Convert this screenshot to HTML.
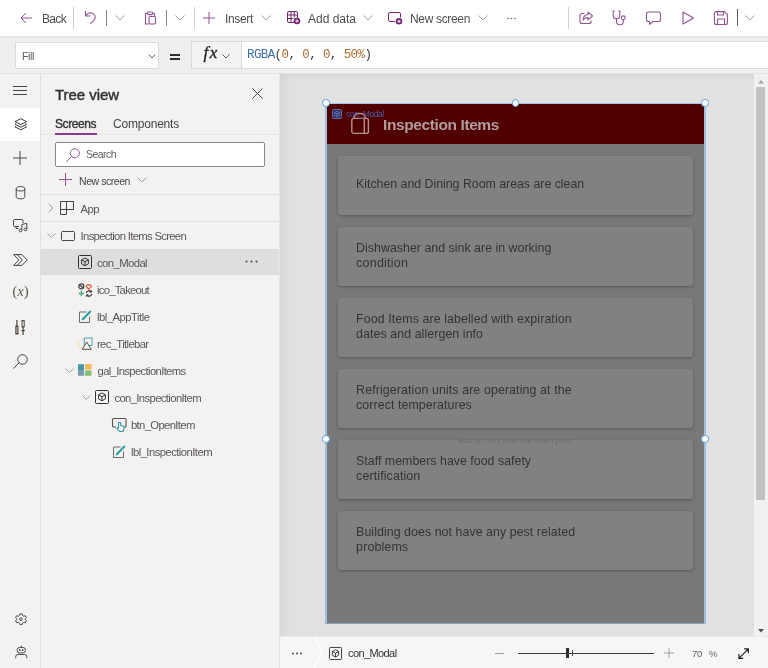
<!DOCTYPE html>
<html lang="en"><head><meta charset="utf-8"><title>Power Apps Studio - Inspection Items</title>
<style>
html,body{margin:0;padding:0}
body{width:768px;height:668px;position:relative;overflow:hidden;background:#f3f2f1;font-family:"Liberation Sans",sans-serif}
.a,.t,svg{position:absolute}
.t{white-space:nowrap}
svg{overflow:visible}
.topbar{left:0;top:0;width:768px;height:36px;background:#fff}
.fbar{left:0;top:36px;width:768px;height:38px;background:#f0efee;border-top:2px solid #e8e7e5;border-bottom:1px solid #e6e5e3;box-sizing:border-box}
.vsep{width:1px;background:#c8c6c4}
.card{left:338px;width:355px;height:59px;background:#818181;border-radius:3px;box-shadow:0 1px 3px rgba(0,0,0,.28)}
.h{width:5.500px;height:5.500px;border-radius:50%;background:#fff;border:1px solid #5a9ad8;box-sizing:content-box}
.row-sel{left:41px;top:248.700px;width:237.500px;height:26.600px;background:#dfdedc}
.hl{height:1px;background:#e1dfdd}
#app{position:absolute;left:0;top:0;width:768px;height:668px;will-change:transform}

</style></head>
<body>
<div id="app">
<!-- top command bar -->
<div class="a topbar"></div>
<div class="a vsep" style="left:72.500px;top:7px;height:22px;background:#d2d0ce"></div>
<div class="a vsep" style="left:106px;top:10px;height:16px;background:#8a8886"></div>
<div class="a vsep" style="left:166px;top:10px;height:16px;background:#8a8886"></div>
<div class="a vsep" style="left:194px;top:7px;height:22px;background:#d2d0ce"></div>
<div class="a vsep" style="left:568px;top:7px;height:22px;background:#d2d0ce"></div>
<div class="a vsep" style="left:737px;top:9px;height:17px;background:#605e5c"></div>

<!-- back arrow -->
<svg style="left:20px;top:12px" width="12" height="12" viewBox="0 0 12 12" fill="none" stroke="#8f558f" stroke-width="1"><path d="M12 6H1M6 1L1 6l5 5"/></svg>
<!-- undo -->
<svg style="left:84px;top:10px" width="13" height="14" viewBox="0 0 13 14" fill="none" stroke="#8f558f" stroke-width="1.1"><path d="M1.5 1v5h5"/><path d="M1.8 5.8C3.5 3.2 6.6 2 9.2 3.6c2.6 1.7 2.6 5 .6 7L6 13.6"/></svg>
<!-- chevrons -->
<svg style="left:115px;top:15px" width="10" height="6" viewBox="0 0 10 6" fill="none" stroke="#a19f9d" stroke-width="1"><path d="M.5.5l4.5 4.5L9.500.5"/></svg>
<svg style="left:175px;top:15px" width="10" height="6" viewBox="0 0 10 6" fill="none" stroke="#a19f9d" stroke-width="1"><path d="M.5.5l4.5 4.5L9.500.5"/></svg>
<svg style="left:261px;top:15px" width="10" height="6" viewBox="0 0 10 6" fill="none" stroke="#a19f9d" stroke-width="1"><path d="M.5.5l4.5 4.5L9.500.5"/></svg>
<svg style="left:363px;top:15px" width="10" height="6" viewBox="0 0 10 6" fill="none" stroke="#a19f9d" stroke-width="1"><path d="M.5.5l4.5 4.5L9.500.5"/></svg>
<svg style="left:478px;top:15px" width="10" height="6" viewBox="0 0 10 6" fill="none" stroke="#a19f9d" stroke-width="1"><path d="M.5.5l4.5 4.5L9.500.5"/></svg>
<svg style="left:745px;top:15px" width="10" height="6" viewBox="0 0 10 6" fill="none" stroke="#a19f9d" stroke-width="1"><path d="M.5.5l4.5 4.5L9.500.5"/></svg>
<!-- paste -->
<svg style="left:144px;top:11px" width="13" height="14" viewBox="0 0 13 14" fill="none" stroke="#8f558f" stroke-width="1.1"><path d="M3.500 2.500H1.500v10.500h3"/><path d="M8.500 2.500h2v2.500"/><rect x="3.500" y="1" width="5" height="2.600" rx=".8" fill="#fff"/><rect x="5" y="5.500" width="6.500" height="7.500" rx="1"/></svg>
<!-- insert plus -->
<svg style="left:203px;top:12px" width="12" height="12" viewBox="0 0 12 12" fill="none" stroke="#8f558f" stroke-width="1"><path d="M6 0v12M0 6h12"/></svg>
<!-- add data -->
<svg style="left:287px;top:11px" width="14" height="14" viewBox="0 0 14 14" fill="none" stroke="#742774" stroke-width="1"><rect x=".5" y=".5" width="10" height="11" rx="1.500"/><path d="M.5 4h10M.5 7.500h6M4 .5v11M7.300.5v6"/><circle cx="10" cy="10" r="3.300" fill="#742774" stroke="none"/><path d="M10 8.300v3.400M8.300 10h3.400" stroke="#fff" stroke-width=".9"/></svg>
<!-- new screen -->
<svg style="left:388px;top:12px" width="15" height="13" viewBox="0 0 15 13" fill="none" stroke="#742774" stroke-width="1"><path d="M7 9.500H2a1.500 1.500 0 0 1-1.500-1.500V2A1.500 1.500 0 0 1 2 .5h9A1.500 1.500 0 0 1 12.500 2v3.500"/><circle cx="11" cy="9.300" r="3.300" fill="#742774" stroke="none"/><path d="M11 7.600V11M9.300 9.300h3.400" stroke="#fff" stroke-width=".9"/></svg>
<!-- ellipsis -->
<svg style="left:507px;top:17px" width="9" height="3" viewBox="0 0 9 3" fill="#605e5c"><circle cx="1" cy="1.500" r=".8"/><circle cx="4.500" cy="1.500" r=".8"/><circle cx="8" cy="1.500" r=".8"/></svg>
<!-- share -->
<svg style="left:579px;top:11px" width="15" height="14" viewBox="0 0 15 14" fill="none" stroke="#8f558f" stroke-width="1.100" stroke-linejoin="round"><path d="M5.500 2.500H3A2 2 0 0 0 1 4.500v6A2 2 0 0 0 3 12.500h7a2 2 0 0 0 2-2V9.500"/><path d="M9 1.200L13.500 5 9 8.800V6.600C6.500 6.500 5 7.400 4 9c.2-3 1.800-5.200 5-5.500z"/></svg>
<!-- stethoscope -->
<svg style="left:612px;top:10px" width="16" height="16" viewBox="0 0 16 16" fill="none" stroke="#8f558f" stroke-width="1.100"><path d="M2.800 1H1.200v4.500a3.300 3.300 0 0 0 6.600 0V1H6.200"/><path d="M4.500 8.800v2.500a3.400 3.400 0 0 0 6.800 0V9.800"/><circle cx="11.300" cy="7.800" r="1.900"/></svg>
<!-- comment -->
<svg style="left:646px;top:11px" width="15" height="14" viewBox="0 0 15 14" fill="none" stroke="#8f558f" stroke-width="1.100" stroke-linejoin="round"><path d="M2.500 1h10a2 2 0 0 1 2 2v5.500a2 2 0 0 1-2 2H7L3.500 13.300V10.500H2.500a2 2 0 0 1-2-2V3a2 2 0 0 1 2-2z"/></svg>
<!-- play -->
<svg style="left:682px;top:11px" width="12" height="14" viewBox="0 0 12 14" fill="none" stroke="#8f558f" stroke-width="1.100" stroke-linejoin="round"><path d="M1 1l10.500 6L1 13z"/></svg>
<!-- save -->
<svg style="left:714px;top:11px" width="14" height="14" viewBox="0 0 14 14" fill="none" stroke="#8f558f" stroke-width="1.100" stroke-linejoin="round"><path d="M2.500.600h8L13.400 3.500v8a2 2 0 0 1-2 2h-9a2 2 0 0 1-2-2v-9a2 2 0 0 1 2-2z"/><path d="M3.500.600v3.400h6V.600M3.500 13.400V8h7v5.400"/></svg>

<!-- formula bar -->
<div class="a fbar"></div>
<div class="a" style="left:15px;top:42px;width:144px;height:26.600px;background:#fff;border:1px solid #dcdad8;box-sizing:border-box;border-radius:1px"></div>
<svg style="left:147.500px;top:53.500px" width="8" height="5" viewBox="0 0 8 5" fill="none" stroke="#605e5c" stroke-width="1"><path d="M.5.5L4 4 7.500.5"/></svg>
<div class="a" style="left:170px;top:54px;width:10px;height:2px;background:#323130"></div>
<div class="a" style="left:170px;top:58px;width:10px;height:2px;background:#323130"></div>
<div class="a" style="left:191px;top:41px;width:577px;height:28px;background:#fff;border-top:1px solid #dddbd9;border-bottom:1px solid #dddbd9;box-sizing:border-box"></div>
<div class="a" style="left:191px;top:42px;width:51px;height:26px;background:#f4f3f2;border:1px solid #dcdad8;border-width:0 1px 0 1px;box-sizing:border-box"></div>
<span class="t" style="left:203.500px;top:43px;font:italic 17px/20px 'Liberation Serif',serif;color:#201f1e;letter-spacing:1.600px;-webkit-text-stroke:.35px #201f1e">fx</span>
<svg style="left:222px;top:54px" width="8" height="5" viewBox="0 0 8 5" fill="none" stroke="#605e5c" stroke-width="1"><path d="M.5.5L4 4 7.500.5"/></svg>
<span class="t" style="left:247px;top:46px;font:12.500px/18px 'Liberation Mono',monospace;color:#3b3a39;letter-spacing:-.6px"><span style="color:#3d6fa8">RGBA</span>(<span style="color:#b06a30">0</span>, <span style="color:#b06a30">0</span>, <span style="color:#b06a30">0</span>, <span style="color:#b06a30">50%</span>)</span>

<!-- left rail -->
<div class="a" style="left:0;top:74px;width:40px;height:594px;background:#f3f2f1;border-right:1px solid #e1dfdd"></div>
<div class="a" style="left:0;top:108px;width:40px;height:33px;background:#fff"></div>
<svg style="left:13px;top:86px" width="14" height="9" viewBox="0 0 14 9" fill="none" stroke="#484644" stroke-width="1"><path d="M0 .5h14M0 4.500h14M0 8.500h14"/></svg>
<!-- layers -->
<svg style="left:13.500px;top:118px" width="13.500" height="12.500" viewBox="0 0 14 13" fill="none" stroke="#323130" stroke-width="1" stroke-linejoin="round"><path d="M7 .7l6 3.100L7 6.900 1 3.800z"/><path d="M2.200 5.900L1 6.500l6 3.100 6-3.100-1.200-.6"/><path d="M2.200 8.600L1 9.200l6 3.100 6-3.100-1.200-.6"/></svg>
<svg style="left:13px;top:151px" width="14" height="14" viewBox="0 0 14 14" fill="none" stroke="#484644" stroke-width="1"><path d="M7 0v14M0 7h14"/></svg>
<!-- cylinder -->
<svg style="left:14.500px;top:185.500px" width="11" height="13.500" viewBox="0 0 11 13.500" fill="none" stroke="#484644" stroke-width="1"><ellipse cx="5.500" cy="2.800" rx="4.300" ry="2.200"/><path d="M1.200 2.800v7.800c0 1.300 1.900 2.300 4.300 2.300s4.300-1 4.300-2.300V2.800"/></svg>
<!-- media -->
<svg style="left:12.500px;top:219px" width="15" height="14" viewBox="0 0 15 14" fill="none" stroke="#484644" stroke-width="1"><path d="M6 7.500H1.700A1.200 1.200 0 0 1 .5 6.300V1.700A1.200 1.200 0 0 1 1.700.5h7.100A1.200 1.200 0 0 1 10 1.700v2.300"/><path d="M3 7.500v2h2.500"/><path d="M8.800 11.300V5.500l5-1.200v5.900"/><circle cx="7.500" cy="11.500" r="1.400"/><circle cx="12.400" cy="10.400" r="1.400"/></svg>
<!-- power automate -->
<svg style="left:12.500px;top:254px" width="15" height="12" viewBox="0 0 15 12" fill="none" stroke="#484644" stroke-width="1" stroke-linejoin="round"><path d="M.6.600h8.400l5.200 5.400-5.200 5.400H.6l5.200-5.400z"/><path d="M4.200.600l5.200 5.400-5.200 5.400"/></svg>
<span class="t" style="left:12.500px;top:283px;font:14px/18px 'Liberation Serif',serif;color:#55534f;letter-spacing:.3px">(<i>x</i>)</span>
<!-- tools -->
<svg style="left:15px;top:319.500px" width="10" height="15" viewBox="0 0 10 15" fill="#484644" stroke="none"><rect x="1.300" y="0" width="1.200" height="6"/><rect x=".3" y="5.500" width="3.200" height="9" rx=".6"/><rect x="1.300" y="7" width="1.200" height="6" fill="#c9a9a0"/><rect x="6.500" y="0" width="3.200" height="7.500" rx=".6"/><rect x="7.500" y="1.200" width="1.200" height="5" fill="#f3f2f1"/><rect x="7.500" y="7" width="1.200" height="8"/><rect x="6.300" y="10" width="3.600" height="1.100"/></svg>
<!-- search -->
<svg style="left:12.500px;top:353.500px" width="15" height="15" viewBox="0 0 15 15" fill="none" stroke="#484644" stroke-width="1"><circle cx="9.500" cy="5.500" r="4.800"/><path d="M6 9L.5 14.500"/></svg>
<!-- gear -->
<svg style="left:14.500px;top:613px" width="12" height="12.500" viewBox="0 0 13 14" fill="none" stroke="#484644" stroke-width="1.100" stroke-linejoin="round"><circle cx="6.500" cy="7" r="1.500"/><path d="M5.300 1h2.400l.5 1.800 1.400.8 1.800-.5 1.200 2.100-1.300 1.300v1l1.300 1.300-1.200 2.100-1.800-.5-1.400.8L7.700 13H5.300l-.5-1.800-1.400-.8-1.800.5L.4 8.800 1.700 7.500v-1L.4 5.200l1.200-2.100 1.800.5 1.400-.8z"/></svg>
<!-- agent -->
<svg style="left:15px;top:645px" width="12.500" height="14" viewBox="0 0 14 15" fill="none" stroke="#484644" stroke-width="1.100" stroke-linejoin="round"><path d="M7 .5v2"/><rect x="2.500" y="2.500" width="9" height="6" rx="2.300"/><circle cx="5.400" cy="5.300" r=".6" fill="#484644"/><circle cx="8.600" cy="5.300" r=".6" fill="#484644"/><path d="M.8 14.500v-1.700A2.500 2.500 0 0 1 3.300 10.300h7.400a2.500 2.500 0 0 1 2.500 2.500v1.700"/></svg>

<!-- tree panel -->
<div class="a" style="left:41px;top:74px;width:237.500px;height:594px;background:#f3f2f1;border-right:1px solid #e6e5e3"></div>
<div class="a hl" style="left:41px;top:133.500px;width:238px;background:#e7e6e4"></div>
<svg style="left:252px;top:88px" width="11" height="11" viewBox="0 0 11 11" fill="none" stroke="#484644" stroke-width="1"><path d="M.5.5l10 10M10.500.5l-10 10"/></svg>
<div class="a" style="left:55px;top:132px;width:42px;height:2px;background:#8a3a8a;margin-top:.5px"></div>
<div class="a" style="left:55px;top:141.500px;width:210px;height:25px;background:#fff;border:1px solid #8a8886;border-radius:2px;box-sizing:border-box"></div>
<svg style="left:66px;top:148px" width="14" height="14" viewBox="0 0 14 14" fill="none" stroke="#8f558f" stroke-width="1"><circle cx="8.800" cy="5.200" r="4.500"/><path d="M5.500 8.500L.5 13.500"/></svg>
<svg style="left:59px;top:173px" width="13" height="13" viewBox="0 0 13 13" fill="none" stroke="#8f558f" stroke-width="1"><path d="M6.500 0v13M0 6.500h13"/></svg>
<svg style="left:137px;top:177px" width="10" height="6" viewBox="0 0 10 6" fill="none" stroke="#a19f9d" stroke-width="1"><path d="M.5.5l4.500 4.500L9.500.5"/></svg>
<div class="a hl" style="left:41px;top:194px;width:238px"></div>
<div class="a hl" style="left:41px;top:221px;width:238px"></div>
<div class="a row-sel"></div>
<!-- App row -->
<svg style="left:48px;top:203px" width="6" height="10" viewBox="0 0 6 10" fill="none" stroke="#a19f9d" stroke-width="1"><path d="M.5.5L5 5 .5 9.500"/></svg>
<svg style="left:60px;top:201px" width="14" height="14" viewBox="0 0 14 14" fill="none" stroke="#484644" stroke-width="1"><rect x=".5" y=".5" width="13" height="8"/><path d="M6.500.5v13M.5 8.500v5h6"/></svg>
<!-- screen row -->
<svg style="left:47px;top:233px" width="9" height="6" viewBox="0 0 9 6" fill="none" stroke="#a19f9d" stroke-width="1"><path d="M.5.5l4 4 4-4"/></svg>
<svg style="left:61px;top:231px" width="14" height="10" viewBox="0 0 14 10" fill="none" stroke="#484644" stroke-width="1"><rect x=".5" y=".5" width="13" height="9" rx="1"/></svg>
<!-- con_Modal -->
<svg style="left:77.500px;top:255px" width="14" height="14" viewBox="0 0 14 14" fill="none" stroke="#323130" stroke-width="1" stroke-linejoin="round"><rect x=".5" y=".5" width="13" height="13" rx="1"/><path d="M7 3l3.400 1.800v4L7 10.800 3.600 8.800v-4zM3.600 4.800L7 6.700l3.400-1.900M7 6.700v4.100"/></svg>
<svg style="left:245px;top:260px" width="13" height="3" viewBox="0 0 13 3" fill="#484644"><circle cx="1.500" cy="1.500" r="1"/><circle cx="6.500" cy="1.500" r="1"/><circle cx="11.500" cy="1.500" r="1"/></svg>
<!-- ico_Takeout (icons) -->
<svg style="left:77.500px;top:282.500px" width="15" height="14" viewBox="0 0 15 14" fill="none" stroke-width="1.300"><circle cx="3.300" cy="3.300" r="2.500" stroke="#484644"/><path d="M1.600 1.600l3.400 3.400" stroke="#484644"/><path d="M10.800 6.300L8.300 3.600a1.500 1.500 0 0 1 2.500-1.400 1.500 1.500 0 0 1 2.500 1.400z" stroke="#e0664a" stroke-linejoin="round"/><path d="M3.300 7.800v5.400M.6 10.500H6" stroke="#4aa878"/><path d="M8.300 10a2.700 2.700 0 0 1 4.800-1.200M13.700 11a2.700 2.700 0 0 1-4.800 1.200" stroke="#484644"/><path d="M13.500 7.200v2h-2M8.500 13.800v-2h2" stroke="#484644" stroke-width="1"/></svg>
<!-- lbl_AppTitle -->
<svg style="left:79px;top:309.5px" width="13" height="13" viewBox="0 0 13 13" fill="none"><path d="M7.500 2H.5v10.500h10V6.500" stroke="#6e6c6a" stroke-width="1"/><path d="M3.800 9.300L11.300 1.600" stroke="#2aa0a4" stroke-width="2.100" stroke-linecap="round"/><path d="M2.900 10.300l.5-1.800 1.300 1.300z" fill="#2aa0a4"/></svg>
<!-- rec_Titlebar -->
<svg style="left:77px;top:337px" width="16" height="14" viewBox="0 0 16 14" fill="none" stroke-width="1"><circle cx="5" cy="7" r="4.300" stroke="#f2d6a8"/><rect x="7.300" y="1" width="7.700" height="7.500" stroke="#4aa6b8" fill="#f3f2f1"/><path d="M9.700 5l4.500 7.300H5.200z" stroke="#55534f" fill="#f3f2f1" stroke-linejoin="round"/></svg>
<!-- gal_InspectionItems -->
<svg style="left:64.500px;top:368px" width="9" height="6" viewBox="0 0 9 6" fill="none" stroke="#a19f9d" stroke-width="1"><path d="M.5.5l4 4 4-4"/></svg>
<svg style="left:77.500px;top:364px" width="13.500" height="12" viewBox="0 0 14 12"><rect x="0" y="0" width="6.300" height="6" fill="#4a9aa4"/><rect x="0" y="6" width="6.300" height="6" fill="#7c9cac"/><rect x="7.300" y="0" width="6.700" height="5.500" fill="#f0b850"/><rect x="7.300" y="6.500" width="6.700" height="5.500" fill="#84c070"/></svg>
<!-- con_InspectionItem -->
<svg style="left:81.500px;top:395px" width="9" height="6" viewBox="0 0 9 6" fill="none" stroke="#a19f9d" stroke-width="1"><path d="M.5.5l4 4 4-4"/></svg>
<svg style="left:94.500px;top:390px" width="14" height="14" viewBox="0 0 14 14" fill="none" stroke="#323130" stroke-width="1" stroke-linejoin="round"><rect x=".5" y=".5" width="13" height="13" rx="1"/><path d="M7 3l3.400 1.800v4L7 10.800 3.600 8.800v-4zM3.600 4.800L7 6.700l3.400-1.900M7 6.700v4.100"/></svg>
<!-- btn_OpenItem -->
<svg style="left:111.500px;top:418px" width="15" height="15" viewBox="0 0 15 15" fill="none" stroke-width="1.100"><path d="M4 9H1.500a1 1 0 0 1-1-1v-6.500a1 1 0 0 1 1-1h11.500a1 1 0 0 1 1 1v6.500a1 1 0 0 1-1 1H12.500" stroke="#55534f"/><path d="M6.500 10V5.300a1.100 1.100 0 0 1 2.200 0V7.500l2.300.5a1.500 1.500 0 0 1 1.100 1.800l-.5 2.200a2 2 0 0 1-2 1.500H8.500a2.500 2.500 0 0 1-2-1L4.800 10.500a1 1 0 0 1 1.700-.5z" stroke="#2a95a5" fill="#f3f2f1" stroke-linejoin="round"/></svg>
<!-- lbl_InspectionItem -->
<svg style="left:112.5px;top:444.5px" width="13" height="13" viewBox="0 0 13 13" fill="none"><path d="M7.500 2H.5v10.500h10V6.500" stroke="#6e6c6a" stroke-width="1"/><path d="M3.800 9.300L11.300 1.600" stroke="#2aa0a4" stroke-width="2.100" stroke-linecap="round"/><path d="M2.900 10.300l.5-1.800 1.300 1.300z" fill="#2aa0a4"/></svg>

<!-- canvas -->
<div class="a" style="left:279.500px;top:74px;width:474.500px;height:562px;background:linear-gradient(180deg,rgba(0,0,0,.045) 0,rgba(0,0,0,0) 7px),linear-gradient(90deg,#d9d9d9 0,#e1e1e1 11px)"></div>
<!-- scrollbar -->
<div class="a" style="left:754px;top:74px;width:14px;height:562px;background:#f1f1f1"></div>
<div class="a" style="left:756px;top:87px;width:9px;height:413px;background:#c1c1c1"></div>
<svg style="left:757.500px;top:79.500px" width="6" height="3.500" viewBox="0 0 7 4" fill="#a3a3a3"><path d="M0 4L3.500 0 7 4z"/></svg>
<svg style="left:757.500px;top:628.800px" width="6" height="3.500" viewBox="0 0 7 4" fill="#505050"><path d="M0 0l3.500 4L7 0z"/></svg>

<!-- app surface -->
<div class="a" style="left:324.500px;top:102.500px;width:381.800px;height:521.300px;background:#787878;border:2px solid #9cc0e4;border-top:1px solid #a4c6ea;border-bottom:1px solid #8aa4c0;box-sizing:border-box"></div>
<div class="a" style="left:326.500px;top:103.500px;width:377.800px;height:40.200px;background:#510000"></div>
<div class="a card" style="top:156px"></div>
<div class="a card" style="top:227px"></div>
<div class="a card" style="top:298px"></div>
<div class="a card" style="top:369px"></div>
<div class="a card" style="top:440px"></div>
<div class="a card" style="top:511px"></div>
<!-- bag icon -->
<svg style="left:351px;top:112px" width="18" height="22" viewBox="0 0 18 22" fill="none" stroke="#b49090" stroke-width="1.400"><rect x=".8" y="6.400" width="16.600" height="15" rx="2"/><path d="M13.300 6.400v15"/><path d="M3.200 6.400V5.800a4.300 4.300 0 0 1 4.300-4.300h2.200A4.300 4.300 0 0 1 14 5.800v.6"/></svg>
<!-- tag icon -->
<svg style="left:331.500px;top:109px" width="10" height="10" viewBox="0 0 10 10" fill="none" stroke="#5a78c0" stroke-width=".9"><rect x=".5" y=".5" width="9" height="9" rx="1" fill="rgba(50,80,160,.55)"/><path d="M5 2.300l2.300 1.200v2.800L5 7.700 2.700 6.300V3.500zM2.700 3.500L5 4.800l2.300-1.300M5 4.800v2.900"/></svg>
<!-- handles -->
<div class="a h" style="left:322.25px;top:99.25px"></div>
<div class="a h" style="left:511.75px;top:99.25px"></div>
<div class="a h" style="left:701.25px;top:99.25px"></div>
<div class="a h" style="left:322.25px;top:435.25px"></div>
<div class="a h" style="left:701.25px;top:435.25px"></div>

<!-- bottom bar -->
<div class="a" style="left:279.500px;top:636px;width:488.500px;height:32px;background:#f7f6f5;border-top:1px solid #ebeae8;box-sizing:border-box"></div>
<svg style="left:292px;top:652px" width="10" height="3" viewBox="0 0 10 3" fill="#484644"><circle cx="1" cy="1.500" r=".95"/><circle cx="5" cy="1.500" r=".95"/><circle cx="9" cy="1.500" r=".95"/></svg>
<svg style="left:313.500px;top:637px" width="9" height="31" viewBox="0 0 9 31" fill="none" stroke="#fff" stroke-width="1.500"><path d="M.5 0l7 15.500-7 15.500"/></svg>
<svg style="left:329px;top:647px" width="13" height="13" viewBox="0 0 14 14" fill="none" stroke="#323130" stroke-width="1" stroke-linejoin="round"><rect x=".5" y=".5" width="13" height="13" rx="1"/><path d="M7 3l3.400 1.800v4L7 10.800 3.600 8.800v-4zM3.600 4.800L7 6.700l3.400-1.900M7 6.700v4.100"/></svg>
<div class="a" style="left:495px;top:653px;width:9px;height:1px;background:#a19f9d"></div>
<div class="a" style="left:518px;top:652.800px;width:136px;height:1.300px;background:#3b3a39"></div>
<div class="a" style="left:566px;top:648px;width:2.500px;height:10px;background:#323130"></div>
<div class="a" style="left:572px;top:650px;width:1px;height:6px;background:#484644"></div>
<svg style="left:664px;top:648px" width="10" height="10" viewBox="0 0 10 10" fill="none" stroke="#a19f9d" stroke-width="1"><path d="M5 0v10M0 5h10"/></svg>
<svg style="left:738px;top:648px" width="11.300" height="11.300" viewBox="0 0 12 12" fill="none" stroke="#201f1e" stroke-width="1.250"><path d="M1 11L11 1M6.500 1H11v4.500M1 6.500V11h4.500"/></svg>

<span class="t" style="left:42.0px;top:12.0px;font-size:12px;line-height:14px;color:#504e4c;letter-spacing:-0.672px;">Back</span>
<span class="t" style="left:225.0px;top:12.0px;font-size:12px;line-height:14px;color:#504e4c;letter-spacing:-0.336px;">Insert</span>
<span class="t" style="left:308.0px;top:12.0px;font-size:12px;line-height:14px;color:#504e4c;letter-spacing:-0.006px;">Add data</span>
<span class="t" style="left:410.0px;top:12.0px;font-size:12px;line-height:14px;color:#504e4c;letter-spacing:-0.336px;">New screen</span>
<span class="t" style="left:22.0px;top:50.0px;font-size:10.5px;line-height:12px;color:#605e5c;letter-spacing:-0.355px;">Fill</span>
<span class="t" style="left:55.0px;top:86.0px;font-size:15px;line-height:17px;color:#323130;letter-spacing:-0.052px;-webkit-text-stroke:.45px #323130;">Tree view</span>
<span class="t" style="left:55.0px;top:117.0px;font-size:12px;line-height:14px;color:#323130;letter-spacing:-0.433px;-webkit-text-stroke:.35px #323130;">Screens</span>
<span class="t" style="left:113.0px;top:117.0px;font-size:12px;line-height:14px;color:#484644;letter-spacing:-0.205px;">Components</span>
<span class="t" style="left:86.0px;top:148.0px;font-size:10.5px;line-height:12px;color:#605e5c;letter-spacing:-0.547px;">Search</span>
<span class="t" style="left:79.0px;top:175.0px;font-size:10.5px;line-height:12px;color:#484644;letter-spacing:-0.445px;">New screen</span>
<span class="t" style="left:80.6px;top:203.0px;font-size:11.3px;line-height:12px;color:#5a5856;letter-spacing:-0.536px;">App</span>
<span class="t" style="left:80.6px;top:230.0px;font-size:11.3px;line-height:12px;color:#5a5856;letter-spacing:-0.683px;">Inspection Items Screen</span>
<span class="t" style="left:97.0px;top:257.0px;font-size:11.3px;line-height:12px;color:#5a5856;letter-spacing:-0.585px;">con_Modal</span>
<span class="t" style="left:97.0px;top:284.0px;font-size:11.3px;line-height:12px;color:#5a5856;letter-spacing:-0.754px;">ico_Takeout</span>
<span class="t" style="left:97.0px;top:311.0px;font-size:11.3px;line-height:12px;color:#5a5856;letter-spacing:-0.517px;">lbl_AppTitle</span>
<span class="t" style="left:97.0px;top:338.0px;font-size:11.3px;line-height:12px;color:#5a5856;letter-spacing:-0.653px;">rec_Titlebar</span>
<span class="t" style="left:97.5px;top:365.0px;font-size:11.3px;line-height:12px;color:#5a5856;letter-spacing:-0.657px;">gal_InspectionItems</span>
<span class="t" style="left:114.4px;top:392.0px;font-size:11.3px;line-height:12px;color:#5a5856;letter-spacing:-0.632px;">con_InspectionItem</span>
<span class="t" style="left:131.0px;top:419.0px;font-size:11.3px;line-height:12px;color:#5a5856;letter-spacing:-0.658px;">btn_OpenItem</span>
<span class="t" style="left:131.0px;top:446.0px;font-size:11.3px;line-height:12px;color:#5a5856;letter-spacing:-0.559px;">lbl_InspectionItem</span>
<span class="t" style="left:348.0px;top:647.0px;font-size:11px;line-height:12px;color:#323130;letter-spacing:-0.592px;">con_Modal</span>
<span class="t" style="left:692.0px;top:648.0px;font-size:9.6px;line-height:11px;color:#605e5c;letter-spacing:-0.336px;">70</span>
<span class="t" style="left:709.0px;top:648.0px;font-size:9.6px;line-height:11px;color:#605e5c;letter-spacing:-0.931px;">%</span>
<span class="t" style="left:383.0px;top:116.0px;font-size:15.5px;line-height:17px;font-weight:700;color:#b09c9c;letter-spacing:-0.395px;">Inspection Items</span>
<span class="t" style="left:346.3px;top:110.0px;font-size:8.2px;line-height:9px;color:#4a5cae;letter-spacing:-0.285px;">con_Modal</span>
<span class="t" style="left:458.3px;top:436.0px;font-size:7.5px;line-height:9px;color:#6c6c6c;letter-spacing:0.193px;">Add an item from the insert pane</span>
<span class="t" style="left:356.1px;top:177.0px;font-size:12.4px;line-height:14px;color:#333;letter-spacing:-0.035px;">Kitchen and Dining Room areas are clean</span>
<span class="t" style="left:356.1px;top:241.0px;font-size:12.4px;line-height:14px;color:#333;letter-spacing:0.012px;">Dishwasher and sink are in working</span>
<span class="t" style="left:356.1px;top:256.0px;font-size:12.4px;line-height:14px;color:#333;letter-spacing:0.277px;">condition</span>
<span class="t" style="left:356.1px;top:312.0px;font-size:12.4px;line-height:14px;color:#333;letter-spacing:0.089px;">Food Items are labelled with expiration</span>
<span class="t" style="left:356.1px;top:327.0px;font-size:12.4px;line-height:14px;color:#333;letter-spacing:0.070px;">dates and allergen info</span>
<span class="t" style="left:356.1px;top:383.0px;font-size:12.4px;line-height:14px;color:#333;letter-spacing:0.103px;">Refrigeration units are operating at the</span>
<span class="t" style="left:356.1px;top:398.0px;font-size:12.4px;line-height:14px;color:#333;letter-spacing:0.074px;">correct temperatures</span>
<span class="t" style="left:356.1px;top:454.0px;font-size:12.4px;line-height:14px;color:#333;letter-spacing:0.009px;">Staff members have food safety</span>
<span class="t" style="left:356.1px;top:469.0px;font-size:12.4px;line-height:14px;color:#333;letter-spacing:0.125px;">certification</span>
<span class="t" style="left:356.1px;top:525.0px;font-size:12.4px;line-height:14px;color:#333;letter-spacing:0.051px;">Building does not have any pest related</span>
<span class="t" style="left:356.1px;top:540.0px;font-size:12.4px;line-height:14px;color:#333;letter-spacing:0.141px;">problems</span>
</div>
</body></html>
